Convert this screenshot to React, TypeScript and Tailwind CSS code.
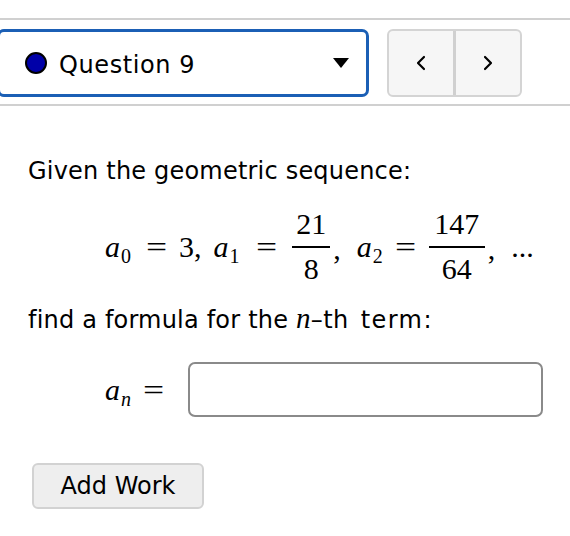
import { ChevronLeft, ChevronRight } from 'lucide-react';

const sans = { fontFamily: '"DejaVu Sans", "Noto Sans", sans-serif' };
const serif = { fontFamily: '"Liberation Serif", "DejaVu Serif", serif' };

function Frac({ num, den, w }: { num: string; den: string; w: string }) {
  return (
    <span className={`inline-flex flex-col items-center leading-none ${w}`}>
      <span className="pb-[7px]">{num}</span>
      <span className="h-[2px] w-full bg-black" />
      <span className="pt-[6px]">{den}</span>
    </span>
  );
}

function Sub({ v, s, italic }: { v: string; s: string; italic?: boolean }) {
  return (
    <span className="inline-flex items-baseline">
      <i className="text-[30px]">{v}</i>
      <span className={`relative top-[6px] ml-[1px] text-[20px] ${italic ? 'italic' : ''}`}>{s}</span>
    </span>
  );
}

function Eq({ ml }: { ml: string }) {
  return <span className={`inline-block scale-x-125 ${ml}`}>=</span>;
}

export default function App() {
  return (
    <div className="h-[536px] w-[570px] overflow-hidden bg-white text-black" style={sans}>
      <div className="mt-[18px] border-t-2 border-[#d0d0d0]" />
      <div className="flex items-center gap-[18px] pt-[9px] pb-[7px]">
        <div className="ml-[-3px] flex h-[68px] w-[372px] items-center rounded-[7px] border-[3px] border-[#1b5fb5] pl-[25px] pr-[16px]">
          <span className="h-[22px] w-[22px] rounded-full border-2 border-black bg-[#0000a8]" />
          <span className="ml-[12px] mt-[3px] text-[24px] tracking-[0.6px]">Question 9</span>
          <span className="ml-auto mr-[1px] h-0 w-0 border-x-[8px] border-t-[10px] border-x-transparent border-t-black" />
        </div>
        <div className="flex h-[68px] w-[135px] overflow-hidden rounded-[6px] border-2 border-[#d4d4d4] bg-[#f6f6f6]">
          <button className="flex flex-1 items-center justify-center border-r-[3px] border-[#d0d0d0]">
            <ChevronLeft className="h-[24px] w-[24px]" strokeWidth={2.2} />
          </button>
          <button className="flex flex-1 items-center justify-center">
            <ChevronRight className="h-[24px] w-[24px]" strokeWidth={2.2} />
          </button>
        </div>
      </div>
      <div className="border-t-2 border-[#d0d0d0]" />

      <div className="pl-[28px] pt-[50px]">
        <p className="text-[24px] leading-[30px] tracking-[0.2px]">Given the geometric sequence:</p>

        <div className="mt-[23px] flex items-center pl-[77px] text-[30px]" style={serif}>
          <Sub v="a" s="0" />
          <Eq ml="ml-[17px]" />
          <span className="ml-[14px]">3,</span>
          <span className="ml-[12px]" />
          <Sub v="a" s="1" />
          <Eq ml="ml-[19px]" />
          <span className="ml-[17px]" />
          <Frac num="21" den="8" w="w-[38px]" />
          <span className="ml-[3px] mt-[3px]">,</span>
          <span className="ml-[16px]" />
          <Sub v="a" s="2" />
          <Eq ml="ml-[14px]" />
          <span className="ml-[15px]" />
          <Frac num="147" den="64" w="w-[56px]" />
          <span className="ml-[3px] mt-[3px]">,</span>
          <span className="ml-[16px]">...</span>
        </div>

        <p className="mt-[19px] text-[24px] leading-[30px] tracking-[0.2px]">
          find a formula for the{' '}
          <i style={serif} className="text-[29px]">n</i>
          <span className="tracking-[0.5px]">–th</span>
          <span className="ml-[12px] tracking-[1.4px]">term:</span>
        </p>

        <div className="mt-[27px] flex items-center">
          <div className="ml-[77px] flex w-[83px] items-center text-[30px]" style={serif}>
            <Sub v="a" s="n" italic />
            <Eq ml="ml-[14px]" />
          </div>
          <div className="h-[55px] w-[355px] rounded-[7px] border-2 border-[#8a8a8a]" />
        </div>

        <button className="mt-[46px] ml-[4px] h-[46px] w-[172px] rounded-[6px] border-2 border-[#d2d2d2] bg-[#eeeeee] text-[24px]">
          Add Work
        </button>
      </div>
    </div>
  );
}
